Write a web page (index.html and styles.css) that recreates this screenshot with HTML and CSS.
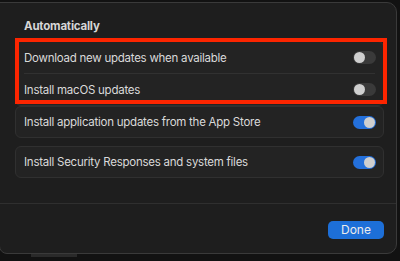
FILE: index.html
```html
<!DOCTYPE html>
<html>
<head>
<meta charset="utf-8">
<link rel="stylesheet" href="styles.css">
</head>
<body>
<div class="backdrop"></div>
<div class="window">
  <div class="content">
    <div class="heading">Automatically</div>
    <div class="card card-group">
      <div class="row">
        <span class="label">Download new updates when available</span>
        <span class="toggle"></span>
      </div>
      <div class="sep"></div>
      <div class="row">
        <span class="label">Install macOS updates</span>
        <span class="toggle"></span>
      </div>
    </div>
    <div class="card card-single">
      <div class="row">
        <span class="label">Install application updates from the App Store</span>
        <span class="toggle on"></span>
      </div>
    </div>
    <div class="card">
      <div class="row">
        <span class="label">Install Security Responses and system files</span>
        <span class="toggle on"></span>
      </div>
    </div>
  </div>
  <div class="footer">
    <button class="done">Done</button>
  </div>
</div>
<div class="highlight"></div>
</body>
</html>
```

FILE: styles.css
```css
html, body {
  margin: 0;
  padding: 0;
  background: #121212;
  width: 400px;
  height: 261px;
  overflow: hidden;
  font-family: Inter, "Liberation Sans", sans-serif;
}
body {
  position: relative;
  padding-top: 2px;
  box-sizing: border-box;
}
.backdrop {
  position: absolute;
  left: 31px;
  top: 254px;
  width: 46px;
  height: 3px;
  background: #2a2a2a;
}
.window {
  width: 398px;
  height: 252px;
  margin-left: -1px;
  box-sizing: border-box;
  background: #1e1e1e;
  border: 1px solid #3a3a3a;
  border-radius: 0 10px 10px 8px;
  display: flex;
  flex-direction: column;
}
.content {
  height: 201px;
  padding: 16px 12px 0 15px;
  box-sizing: border-box;
  border-bottom: 1px solid #2f2f2f;
}
.heading {
  font-size: 11.5px;
  font-weight: 700;
  letter-spacing: -0.2px;
  color: #d6d6d6;
  height: 15px;
  line-height: 15px;
  padding-left: 9px;
  margin-bottom: 7px;
}
.card {
  background: #232323;
  border: 1px solid #303030;
  border-radius: 6px;
  margin-bottom: 9px;
}
.card-group {
  margin-bottom: 0;
}
.card-group .row {
  height: 31px;
}
.card-single {
  margin-bottom: 8px;
}
.row {
  height: 30px;
  display: flex;
  align-items: center;
  justify-content: space-between;
  padding: 0 7px 0 8px;
}
.label {
  font-size: 11.5px;
  color: #dadada;
  letter-spacing: -0.25px;
}
.sep {
  height: 1px;
  background: #313131;
  margin: 0 8px;
}
.toggle {
  width: 23px;
  height: 13px;
  border-radius: 7px;
  background: #3a3a3a;
  position: relative;
}
.toggle::after {
  content: "";
  position: absolute;
  left: 1px;
  top: 1px;
  width: 11px;
  height: 11px;
  border-radius: 50%;
  background: #cfcfcf;
}
.toggle.on {
  background: #2470db;
}
.toggle.on::after {
  left: 11px;
}
.footer {
  flex: 1;
  display: flex;
  justify-content: flex-end;
  align-items: flex-start;
  padding: 17px 12px 0 0;
}
.done {
  width: 56px;
  height: 18px;
  border: none;
  border-radius: 5px;
  background: #1d6fd8;
  color: #ececec;
  font-family: Inter, "Liberation Sans", sans-serif;
  font-size: 12px;
  padding: 0;
  line-height: 18px;
}
.highlight {
  position: absolute;
  left: 15px;
  top: 38px;
  width: 372px;
  height: 66px;
  box-sizing: border-box;
  border: 4px solid #fc2500;
}
```
